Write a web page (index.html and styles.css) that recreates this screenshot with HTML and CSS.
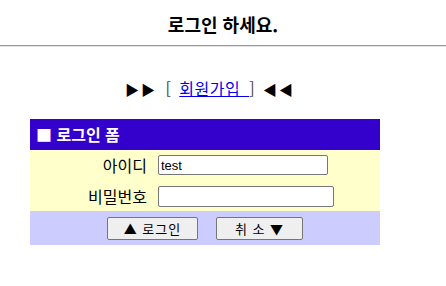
FILE: index.html
```html
<!DOCTYPE html>
<html lang="ko">
<head>
<meta charset="utf-8">
<link rel="stylesheet" href="styles.css">
</head>
<body>
<h3 class="title">로그인 하세요.</h3>
<hr class="rule">
<p class="join"><span class="arr">▶▶</span> <span class="br">[</span> <a href="#" class="join-link">회원가입 </a><span class="br">]</span> <span class="arr">◀◀</span></p>
<form class="login">
  <div class="head">■ 로그인 폼</div>
  <div class="fields">
    <label class="lbl" for="uid">아이디</label>
    <div class="cell"><input id="uid" class="inp inp-id" type="text" value="test"></div>
    <label class="lbl" for="pw">비밀번호</label>
    <div class="cell"><input id="pw" class="inp inp-pw" type="password"></div>
  </div>
  <div class="actions">
    <button type="button" class="btn btn-login">▲ 로그인</button>
    <button type="button" class="btn btn-cancel">취 소 ▼</button>
  </div>
</form>
</body>
</html>
```
FILE: styles.css
```css
html, body {
  margin: 0;
  padding: 0;
  background: #fff;
}
body {
  font-family: "Noto Sans CJK KR", "Noto Sans", sans-serif;
  color: #000;
}
.title {
  margin: 0;
  padding-top: 12px;
  font-size: 18px;
  line-height: 24px;
  font-weight: bold;
  text-align: center;
}
.rule {
  margin: 9px 0 0 0;
  height: 0;
  border: 0;
  border-top: 1px solid #999;
  border-bottom: 1px solid #e4e4e4;
}
.join {
  margin: 31px 0 0 0;
  font-size: 16px;
  line-height: 20px;
  text-align: center;
  word-spacing: 4px;
  padding-right: 26px;
}
.arr {
  font-size: 14px;
  letter-spacing: 2px;
}
.br {
  color: #444;
}
.join-link {
  color: #0000ee;
  text-decoration: underline;
  letter-spacing: 0.5px;
}
.login {
  margin: 20px 0 0 30px;
  width: 350px;
}
.head {
  height: 31px;
  line-height: 31px;
  background: #3300cc;
  color: #fff;
  font-weight: bold;
  font-size: 16px;
  padding-left: 6px;
}
.fields {
  background: #ffffcc;
  display: grid;
  grid-template-columns: 120px 1fr;
  grid-auto-rows: 30.5px;
  align-items: center;
}
.lbl {
  text-align: right;
  font-size: 16px;
  line-height: 20px;
  padding-right: 3px;
}
.cell {
  padding-left: 8px;
  display: flex;
  align-items: center;
}
.inp {
  box-sizing: border-box;
  height: 20px;
  border: 1px solid #767676;
  border-radius: 2px;
  padding: 0 2px;
  font-family: "Liberation Sans", Arial, sans-serif;
  font-size: 13px;
  background: #fff;
}
.inp-id {
  width: 170px;
}
.inp-pw {
  width: 176px;
  height: 21px;
  margin-top: 1px;
}
.actions {
  background: #ccccff;
  height: 34px;
  display: flex;
  justify-content: center;
  align-items: center;
  gap: 18px;
}
.btn {
  box-sizing: border-box;
  height: 23px;
  border: 1px solid #767676;
  border-radius: 2px;
  background: #efefef;
  font-family: "Noto Sans CJK KR", sans-serif;
  font-size: 13px;
  line-height: 19px;
  color: #000;
  padding: 0;
  letter-spacing: 1px;
}
.btn-login {
  width: 91px;
}
.btn-cancel {
  width: 87px;
}
```
